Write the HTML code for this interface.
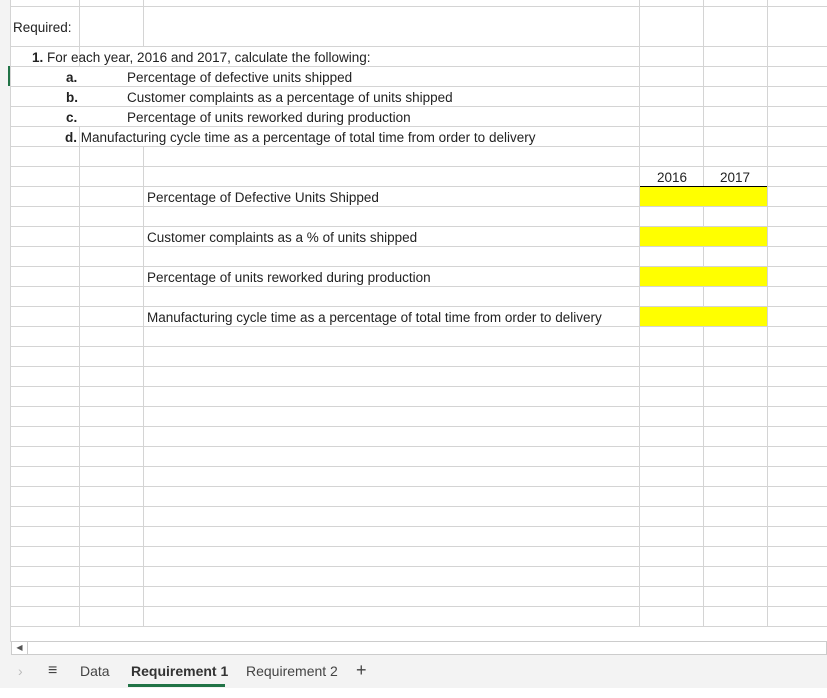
<!DOCTYPE html><html><head><style>
body{margin:0;width:827px;height:698px;overflow:hidden;background:#fff;font-family:"Liberation Sans",sans-serif;position:relative}
.t{position:absolute;font-size:13.5px;color:#222;white-space:nowrap;line-height:20px;margin-top:2px}
.y{position:absolute;background:#ffff00;left:640px;width:127px;height:19px}
.h{position:absolute;left:10px;width:817px;height:1px;background:#d4d4d4}
</style></head><body>
<div style="position:absolute;left:0;top:0;width:10px;height:642px;background:#f3f3f3"></div>
<div class="h" style="top:6px"></div><div class="h" style="top:46px"></div>
<div class="h" style="top:66px"></div><div class="h" style="top:86px"></div><div class="h" style="top:106px"></div><div class="h" style="top:126px"></div><div class="h" style="top:146px"></div><div class="h" style="top:166px"></div><div class="h" style="top:186px"></div><div class="h" style="top:206px"></div><div class="h" style="top:226px"></div><div class="h" style="top:246px"></div><div class="h" style="top:266px"></div><div class="h" style="top:286px"></div><div class="h" style="top:306px"></div><div class="h" style="top:326px"></div><div class="h" style="top:346px"></div><div class="h" style="top:366px"></div><div class="h" style="top:386px"></div><div class="h" style="top:406px"></div><div class="h" style="top:426px"></div><div class="h" style="top:446px"></div><div class="h" style="top:466px"></div><div class="h" style="top:486px"></div><div class="h" style="top:506px"></div><div class="h" style="top:526px"></div><div class="h" style="top:546px"></div><div class="h" style="top:566px"></div><div class="h" style="top:586px"></div><div class="h" style="top:606px"></div><div class="h" style="top:626px"></div>
<svg width="827" height="642" style="position:absolute;left:0;top:0">
<g stroke="#d4d4d4" stroke-width="1">
<line x1="10.5" y1="0" x2="10.5" y2="642"/>
<line x1="79.5" y1="0" x2="79.5" y2="66"/><line x1="79.5" y1="126" x2="79.5" y2="626"/>
<line x1="143.5" y1="0" x2="143.5" y2="46"/><line x1="143.5" y1="146" x2="143.5" y2="626"/>
<line x1="639.5" y1="0" x2="639.5" y2="626"/>
<line x1="703.5" y1="0" x2="703.5" y2="626"/>
<line x1="767.5" y1="0" x2="767.5" y2="626"/>
</g>
<line x1="640" y1="186.5" x2="767" y2="186.5" stroke="#000"/>
<rect x="8" y="66" width="2" height="20" fill="#217346"/>
</svg>
<div class="y" style="top:187px"></div><div class="y" style="top:227px"></div><div class="y" style="top:267px"></div><div class="y" style="top:307px"></div>
<div class="t" style="left:13px;top:16px">Required:</div>
<div class="t" style="left:32px;top:46px"><b>1.</b> For each year, 2016 and 2017, calculate the following:</div>
<div class="t" style="left:66px;top:66px"><b>a.</b></div><div class="t" style="left:127px;top:66px">Percentage of defective units shipped</div>
<div class="t" style="left:66px;top:86px"><b>b.</b></div><div class="t" style="left:127px;top:86px">Customer complaints as a percentage of units shipped</div>
<div class="t" style="left:66px;top:106px"><b>c.</b></div><div class="t" style="left:127px;top:106px">Percentage of units reworked during production</div>
<div class="t" style="left:65px;top:126px"><b>d.</b> Manufacturing cycle time as a percentage of total time from order to delivery</div>
<div class="t" style="left:657px;top:166px">2016</div><div class="t" style="left:720px;top:166px">2017</div>
<div class="t" style="left:147px;top:186px">Percentage of Defective Units Shipped</div>
<div class="t" style="left:147px;top:226px">Customer complaints as a % of units shipped</div>
<div class="t" style="left:147px;top:266px">Percentage of units reworked during production</div>
<div class="t" style="left:147px;top:306px">Manufacturing cycle time as a percentage of total time from order to delivery</div>
<div style="position:absolute;left:0;top:642px;width:827px;height:56px;background:#f3f3f3"></div>
<div style="position:absolute;left:11px;top:641px;width:816px;height:14px;background:#fff;border:1px solid #ccc;box-sizing:border-box"></div>
<div style="position:absolute;left:11px;top:641px;width:17px;height:14px;border:1px solid #ccc;box-sizing:border-box;background:#fff;font-size:8px;color:#555;text-align:center;line-height:12px">◀</div>
<div class="t" style="left:18px;top:659px;color:#bbb;font-size:14px">›</div>
<div class="t" style="left:48px;top:659px;font-size:16px;color:#444">≡</div>
<div class="t" style="left:80px;top:659px;font-size:14px;color:#444">Data</div>
<div class="t" style="left:131px;top:659px;font-size:14px;color:#333;font-weight:bold">Requirement 1</div>
<div style="position:absolute;left:128px;top:684px;width:97px;height:3px;background:#217346"></div>
<div class="t" style="left:246px;top:659px;font-size:14px;color:#444">Requirement 2</div>
<div class="t" style="left:356px;top:658px;font-size:18px;color:#444">+</div>
<div style="position:absolute;left:0;top:688px;width:827px;height:10px;background:#fff"></div>
</body></html>
